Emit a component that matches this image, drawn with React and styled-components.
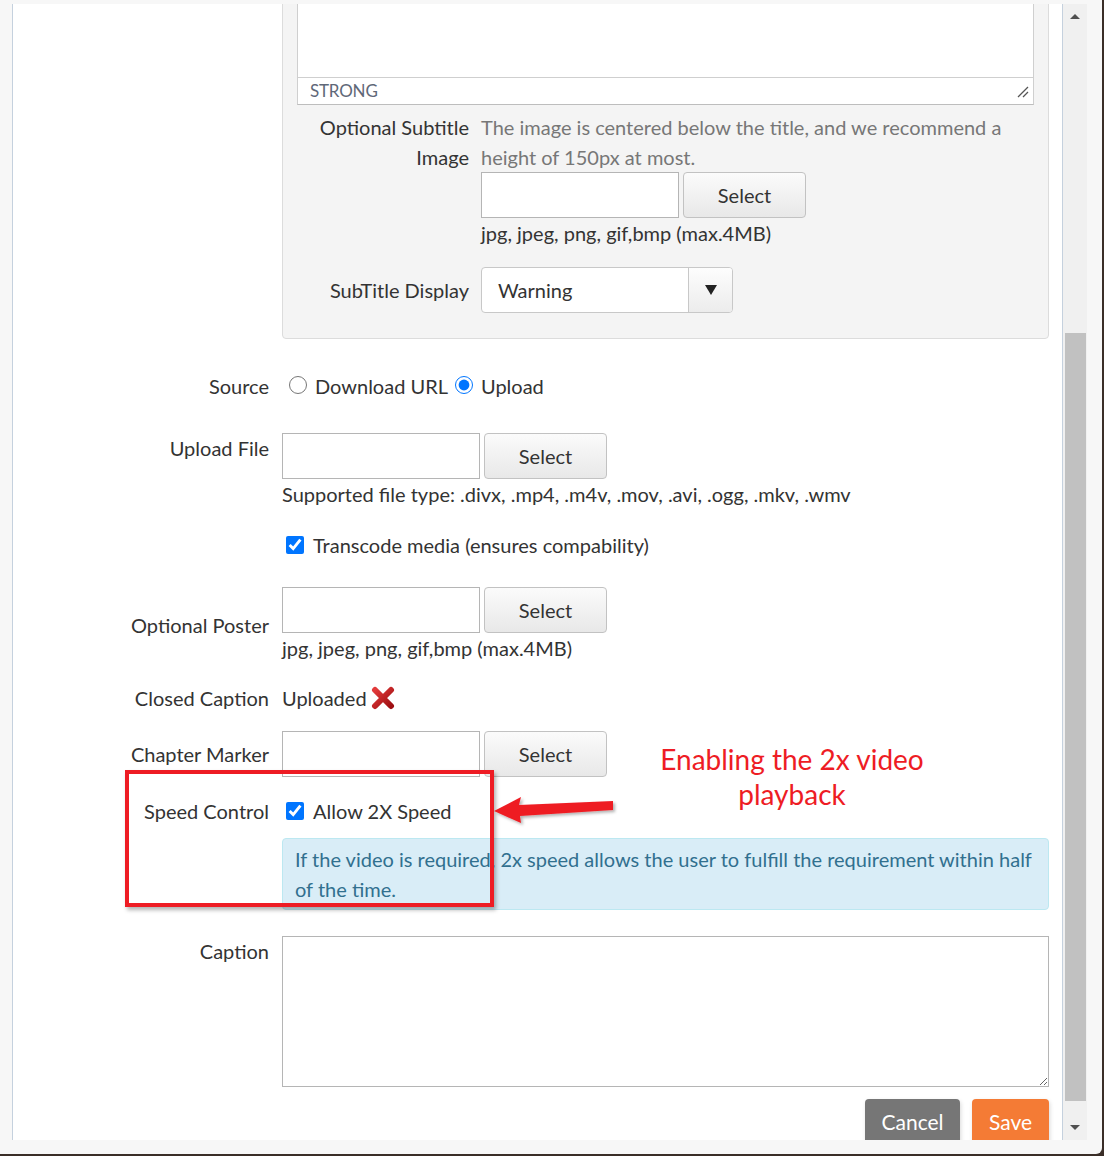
import React, { useLayoutEffect, useRef } from "react";
import styled, { createGlobalStyle } from "styled-components";

const GlobalStyle = createGlobalStyle`
  html, body {
    margin: 0;
    padding: 0;
    background: #3a2e28;
  }
  body {
    font-family: "Lato", "Noto Sans", sans-serif;
    color: #333;
  }
  * {
    box-sizing: border-box;
  }
`;

const Frame = styled.div`
  width: 1102px;
  height: 1154px;
  background: #f7f7f7;
  border-bottom-right-radius: 6px;
  padding: 4px 15px 14px 12px;
  display: flex;
`;

const Panel = styled.div`
  flex: 1;
  display: flex;
  background: #fff;
  border-left: 1px solid #c5d1de;
`;

const Scroller = styled.div`
  flex: 1;
  overflow: hidden;
`;

const Content = styled.div`
  position: relative;
  padding: 0 13px 40px 0;
  font-size: 20px;
  line-height: 30px;
`;

const ScrollBar = styled.div`
  width: 25px;
  border-left: 1px solid #c5d1de;
  background: #f0f0f0;
  display: flex;
  flex-direction: column;
`;

const ScrollArrow = styled.div`
  height: ${(p) => p.$height}px;
  display: flex;
  align-items: center;
  justify-content: center;

  &::before {
    content: "";
    border-left: 5px solid transparent;
    border-right: 5px solid transparent;
    ${(p) => (p.$down ? "border-top" : "border-bottom")}: 5px solid #505050;
  }
`;

const ScrollTrack = styled.div`
  flex: 1;
  display: flex;
  flex-direction: column;
  padding: 0 0 0 2px;
`;

const ScrollThumb = styled.div`
  margin-top: ${(p) => p.$offset}px;
  height: ${(p) => p.$size}px;
  width: 21px;
  background: #c1c1c1;
`;

/* grey box holding the subtitle settings */
const SubtitleBox = styled.div`
  margin-left: 269px;
  background: #f4f4f4;
  border: 1px solid #dcdcdc;
  border-radius: 4px;
  padding: 14px 14px 25px;
`;

const Editor = styled.div`
  border: 1px solid #cfcfcf;
  border-bottom-color: #bdbdbd;
  background: #fff;
`;

const EditorBody = styled.div`
  height: 159px;
`;

const StatusBar = styled.div`
  height: 27px;
  border-top: 1px solid #cfcfcf;
  display: flex;
  align-items: center;
  justify-content: space-between;
  padding: 0 4px 0 12px;
  font-size: 17px;
  color: #5f6878;
  letter-spacing: -0.2px;
`;

const Row = styled.div`
  display: grid;
  grid-template-columns: ${(p) => p.$labelWidth || 256}px 1fr;
  column-gap: ${(p) => p.$gap || 13}px;
  align-items: ${(p) => p.$align || "start"};
  margin-top: ${(p) => p.$mt || 0}px;
`;

const Label = styled.div`
  text-align: right;
  color: #333;
`;

const Field = styled.div`
  display: flex;
  flex-direction: column;
  align-items: flex-start;
`;

const Help = styled.div`
  color: ${(p) => (p.$muted ? "#777" : "#333")};
`;

const FilePicker = styled.div`
  display: flex;
  gap: 4px;
`;

const TextBox = styled.div`
  width: ${(p) => p.$width || 198}px;
  height: 46px;
  border: 1px solid #b5b5b5;
  background: #fff;
`;

const GreyButton = styled.button`
  width: 123px;
  height: 46px;
  border: 1px solid #c2c2c2;
  border-radius: 4px;
  background: linear-gradient(#fbfbfb, #e8e8e8);
  font: inherit;
  font-size: 20px;
  color: #333;
  padding: 0;
`;

const SelectBox = styled.div`
  width: 252px;
  height: 46px;
  border: 1px solid #c8c8c8;
  border-radius: 4px;
  background: #fff;
  display: flex;
  overflow: hidden;
`;

const SelectValue = styled.div`
  flex: 1;
  padding-left: 16px;
  display: flex;
  align-items: center;
`;

const SelectCaret = styled.div`
  width: 44px;
  border-left: 1px solid #c8c8c8;
  background: linear-gradient(#fdfdfd, #ececec);
  display: flex;
  align-items: center;
  justify-content: center;

  &::before {
    content: "";
    border-left: 6px solid transparent;
    border-right: 6px solid transparent;
    border-top: 10px solid #222;
  }
`;

const Options = styled.div`
  display: flex;
  align-items: center;
`;

const Radio = styled.input.attrs({ type: "radio", readOnly: true })`
  width: 18px;
  height: 18px;
  margin: 0 8px 3px 7px;
`;

const Check = styled.input.attrs({ type: "checkbox", readOnly: true })`
  width: 18px;
  height: 18px;
  margin: 0 9px 0 4px;
`;

const OptionText = styled.span`
  color: #333;
`;

const Uploaded = styled.div`
  display: flex;
  align-items: center;
  gap: 4px;
`;

const Alert = styled.div`
  margin-top: 12px;
  align-self: stretch;
  background: #d9edf7;
  border: 1px solid #bce8f1;
  border-radius: 4px;
  color: #31708f;
  padding: 5px 12px 5px 12px;
`;

const Caption = styled.textarea`
  width: 767px;
  height: 151px;
  border: 1px solid #b5b5b5;
  border-radius: 0;
  resize: both;
  font: inherit;
  display: block;
`;

const Actions = styled.div`
  display: flex;
  justify-content: flex-end;
  gap: 12px;
  margin-top: 12px;
`;

const ActionButton = styled.button`
  height: 46px;
  width: ${(p) => p.$width}px;
  border: none;
  border-radius: 4px;
  background: ${(p) => p.$bg};
  color: #fff;
  font: inherit;
  font-size: 21px;
  padding: 0;
  box-shadow: 1px 2px 4px rgba(0, 0, 0, 0.15);
`;

/* red call-out drawn over the speed control */
const CalloutBox = styled.div`
  position: absolute;
  left: 112px;
  top: 868px;
  width: 369px;
  height: 137px;
  border: 4px solid #ee1c24;
  box-shadow: 2px 3px 4px rgba(0, 0, 0, 0.3);
  pointer-events: none;
`;

const CalloutArrow = styled.svg`
  position: absolute;
  left: 477px;
  top: 888px;
  overflow: visible;
`;

const CalloutText = styled.div`
  position: absolute;
  left: 609px;
  top: 840px;
  width: 340px;
  text-align: center;
  color: #ee1c24;
  font-family: "Lato", sans-serif;
  font-size: 28px;
  line-height: 35px;
`;

const RemoveIcon = () => (
  <svg width="24" height="24" viewBox="0 0 24 24">
    <defs>
      <linearGradient id="xred" x1="0" y1="0" x2="1" y2="1">
        <stop offset="0" stopColor="#e23a3a" />
        <stop offset="1" stopColor="#9e0f12" />
      </linearGradient>
    </defs>
    <path
      d="M4 4 L20 20 M20 4 L4 20"
      stroke="url(#xred)"
      strokeWidth="6"
      strokeLinecap="round"
      fill="none"
    />
  </svg>
);

const ResizeGrip = () => (
  <svg width="14" height="14" viewBox="0 0 14 14">
    <path d="M13 3 L3 13 M13 8 L8 13" stroke="#555" strokeWidth="1.3" />
  </svg>
);

const App = () => {
  const scrollRef = useRef(null);

  useLayoutEffect(() => {
    if (scrollRef.current) scrollRef.current.scrollTop = 102;
  }, []);

  return (
    <>
      <GlobalStyle />
      <Frame>
        <Panel>
          <Scroller ref={scrollRef}>
            <Content>
              <SubtitleBox>
                <Editor>
                  <EditorBody />
                  <StatusBar>
                    <span>STRONG</span>
                    <ResizeGrip />
                  </StatusBar>
                </Editor>

                <Row $labelWidth={172} $gap={12} $mt={7}>
                  <Label>Optional Subtitle Image</Label>
                  <Field>
                    <Help $muted>
                      The image is centered below the title, and we recommend a height of
                      150px at most.
                    </Help>
                    <FilePicker>
                      <TextBox />
                      <GreyButton>Select</GreyButton>
                    </FilePicker>
                    <Help>jpg, jpeg, png, gif,bmp (max.4MB)</Help>
                  </Field>
                </Row>

                <Row $labelWidth={172} $gap={12} $mt={19} $align="center">
                  <Label>SubTitle Display</Label>
                  <SelectBox>
                    <SelectValue>Warning</SelectValue>
                    <SelectCaret />
                  </SelectBox>
                </Row>
              </SubtitleBox>

              <Row $mt={32}>
                <Label>Source</Label>
                <Options>
                  <Radio name="source" />
                  <OptionText>Download URL</OptionText>
                  <Radio name="source" defaultChecked />
                  <OptionText>Upload</OptionText>
                </Options>
              </Row>

              <Row $mt={32}>
                <Label>Upload File</Label>
                <Field>
                  <FilePicker>
                    <TextBox />
                    <GreyButton>Select</GreyButton>
                  </FilePicker>
                  <Help>Supported file type: .divx, .mp4, .m4v, .mov, .avi, .ogg, .mkv, .wmv</Help>
                </Field>
              </Row>

              <Row $mt={21}>
                <div />
                <Options>
                  <Check defaultChecked />
                  <OptionText>Transcode media (ensures compability)</OptionText>
                </Options>
              </Row>

              <Row $mt={27} $align="center">
                <Label>Optional Poster</Label>
                <Field>
                  <FilePicker>
                    <TextBox />
                    <GreyButton>Select</GreyButton>
                  </FilePicker>
                  <Help>jpg, jpeg, png, gif,bmp (max.4MB)</Help>
                </Field>
              </Row>

              <Row $mt={20} $align="center">
                <Label>Closed Caption</Label>
                <Uploaded>
                  <span>Uploaded</span>
                  <RemoveIcon />
                </Uploaded>
              </Row>

              <Row $mt={18} $align="center">
                <Label>Chapter Marker</Label>
                <FilePicker>
                  <TextBox />
                  <GreyButton>Select</GreyButton>
                </FilePicker>
              </Row>

              <Row $mt={19}>
                <Label>Speed Control</Label>
                <Field>
                  <Options>
                    <Check defaultChecked />
                    <OptionText>Allow 2X Speed</OptionText>
                  </Options>
                  <Alert>
                    If the video is required, 2x speed allows the user to fulfill the
                    requirement within half of the time.
                  </Alert>
                </Field>
              </Row>

              <Row $mt={26}>
                <Label>Caption</Label>
                <Caption />
              </Row>

              <Actions>
                <ActionButton $width={95} $bg="#767676">Cancel</ActionButton>
                <ActionButton $width={77} $bg="#f47b35">Save</ActionButton>
              </Actions>

              <CalloutBox />
              <CalloutArrow width="130" height="40" viewBox="0 0 130 40">
                <defs>
                  <filter id="arrowShadow" x="-10%" y="-30%" width="130%" height="180%">
                    <feDropShadow dx="2" dy="2" stdDeviation="1.5" floodOpacity="0.3" />
                  </filter>
                </defs>
                <polygon
                  points="4,21 31,7 29,15 123,11 123,20 30,26 31,33"
                  fill="#ee1c24"
                  filter="url(#arrowShadow)"
                />
              </CalloutArrow>
              <CalloutText>
                Enabling the 2x video
                <br />
                playback
              </CalloutText>
            </Content>
          </Scroller>
          <ScrollBar>
            <ScrollArrow $height={24} />
            <ScrollTrack>
              <ScrollThumb $offset={305} $size={768} />
            </ScrollTrack>
            <ScrollArrow $height={26} $down />
          </ScrollBar>
        </Panel>
      </Frame>
    </>
  );
};

export default App;
